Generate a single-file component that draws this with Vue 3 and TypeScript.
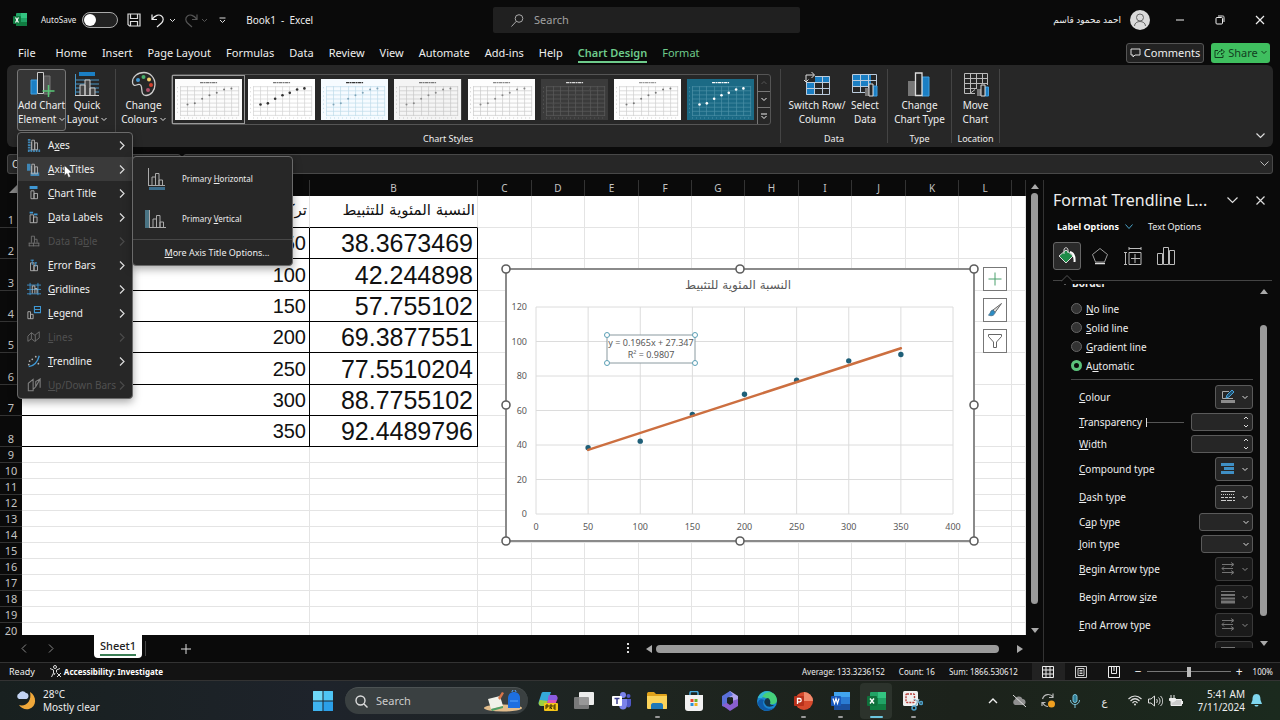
<script setup lang="ts">
import { ref } from 'vue'

type Part = { text: string; key: boolean }

// "A&xes" -> the letter after & is the underlined access key
function parts(label: string): Part[] {
  const at = label.indexOf('&')
  if (at < 0) return [{ text: label, key: false }]
  return [
    { text: label.slice(0, at), key: false },
    { text: label.slice(at + 1, at + 2), key: true },
    { text: label.slice(at + 2), key: false },
  ].filter((p) => p.text.length > 0)
}

const tabs = ['File', 'Home', 'Insert', 'Page Layout', 'Formulas', 'Data', 'Review', 'View', 'Automate', 'Add-ins', 'Help', 'Chart Design', 'Format']

const bars = '<path d="M5 4.500V13.500M5 13.500H8.500V2.500H5.500V13.500M9 5.500h3v8H9z" fill="none" stroke="#b5b5b5"/>'
const menu = [
  { label: 'A&xes', icon: '<path d="M2.500 1v13.500H15" fill="none" stroke="#3f86b5" stroke-width="3" stroke-dasharray="2 1"/>' + bars },
  { label: '&Axis Titles', icon: '<path d="M0 2h4v8H0zM4 12h10v4H4z" fill="#3f86b5"/>' + bars },
  { label: '&Chart Title', icon: '<path d="M3 0h9v3.500H3z" fill="#3f97d3"/><path d="M4.500 14.500V5.500h3.500V14.500zM8 8.500h4v6H8z" fill="none" stroke="#b5b5b5"/>' },
  { label: '&Data Labels', icon: '<path d="M3.500 14.500V5.500H7.500V14.500zM7.500 8h4v6.500h-4z" fill="none" stroke="#b5b5b5"/><path d="M3 2h4v2H3zM8 4h4v2H8z" fill="#3f97d3"/>' },
  { label: 'Data Ta&ble', icon: '<path d="M5 10V2.500h3.500V10M8.500 6h3v4M2 10.500h12M2 13.500h12M2.500 10v4M7.500 10v4M13.500 10v4" fill="none" stroke="#888"/>', off: true },
  { label: '&Error Bars', icon: '<path d="M4 14.500V5.500h4V14.500zM8 14.500V8.500H12V14.500z" fill="none" stroke="#b5b5b5"/><path d="M6 2v6M4 2.500h4M10 5v5M8.500 5.500h3" stroke="#3f97d3" fill="none"/>' },
  { label: '&Gridlines', icon: '<path d="M0 3.500h16M0 8.500h16M0 13.500h16M3.500 1v14M12.500 1v14" stroke="#3f97d3" fill="none"/><path d="M6 13V4.500h3V13M9 7.500h2.500V13" stroke="#c5c5c5" fill="none"/>' },
  { label: '&Legend', icon: '<path d="M8.500.5h7v7h-7zM9 4h6" stroke="#3f97d3" fill="none" stroke-width="1.300"/><path d="M1 14.500V6.500h3V14.500zM4 9.500h3V14.500H4z" fill="none" stroke="#b5b5b5"/>' },
  { label: '&Lines', icon: '<path d="M1 13V7l4-4 4 3 5-4v7l-5 4-4-3-4 3M5 3v7M9.500 6v7" fill="none" stroke="#888"/>', off: true },
  { label: '&Trendline', icon: '<path d="M2 14.500C8 13.500 12 10 14 2" fill="none" stroke="#3f97d3" stroke-width="1.500"/><g fill="#b5b5b5"><circle cx="3" cy="8" r="1"/><circle cx="6" cy="6" r="1"/><circle cx="10" cy="3" r="1"/><circle cx="13" cy="11" r="1"/><circle cx="2" cy="12" r="1"/></g>' },
  { label: '&Up/Down Bars', icon: '<path d="M1.500 14.500V6L7 1.500v13zM7 13l3-3 5-9v10M10 10V4l5-3" fill="none" stroke="#999" stroke-width="1.200"/>', off: true },
]

const styles = [
  { bg: '#fcfcfc', grid: '#cfcfcf', dot: '#777', title: '#777', r: 1 },
  { bg: '#ffffff', grid: '#d5d5d5', dot: '#333', title: '#777', r: 1.3 },
  { bg: '#f6fbff', grid: '#bfdcea', dot: '#7fa4b8', title: '#333', r: 1 },
  { bg: '#f4f4f4', grid: '#c8c8c8', dot: '#888', title: '#777', r: 1 },
  { bg: '#fdfdfd', grid: '#cccccc', dot: '#888', title: '#888', r: 1 },
  { bg: '#3b3b3b', grid: '#5c5c5c', dot: '#4a4a4a', title: '#ddd', r: 1 },
  { bg: '#fefefe', grid: '#cfcfcf', dot: '#777', title: '#999', r: 1 },
  { bg: '#1b6a85', grid: '#4c90a7', dot: '#ffffff', title: '#ffffff', r: 1.3 },
]

const columns = ['A', 'B', 'C', 'D', 'E', 'F', 'G', 'H', 'I', 'J', 'K', 'L', '']
const rows = [
  { a: '50', b: '38.3673469' },
  { a: '100', b: '42.244898' },
  { a: '150', b: '57.755102' },
  { a: '200', b: '69.3877551' },
  { a: '250', b: '77.5510204' },
  { a: '300', b: '88.7755102' },
  { a: '350', b: '92.4489796' },
]
const emptyRows = Array.from({ length: 12 }, (_, i) => i + 9)

// chart geometry
const px = (x: number) => 35 + (x / 400) * 417
const py = (y: number) => 250 - (y / 120) * 207
const xTicks = [0, 50, 100, 150, 200, 250, 300, 350, 400]
const yTicks = [0, 20, 40, 60, 80, 100, 120]
const points = rows.map((r) => ({ x: Number(r.a), y: Number(r.b) }))
const handles = [[5, 5], [239, 5], [473, 5], [5, 141], [473, 141], [5, 277], [239, 277], [473, 277]]
const eqHandles = [[106, 71], [194, 71], [106, 99], [194, 99]]

const line = ref('Automatic')
const lineKinds = ['&No line', '&Solid line', '&Gradient line', 'A&utomatic']
const icCompound = '<path d="M0 1h13v3H0zM3 5h10v3H3zM0 9h13v3H0z" fill="#3f8fc4"/>'
const icDash = '<path d="M0 1.500h14" stroke="#ccc"/><path d="M0 4.500h14" stroke="#ccc" stroke-dasharray="1 1"/><path d="M0 7.500h14" stroke="#ccc" stroke-dasharray="3 1"/><path d="M0 10.500h14" stroke="#ccc" stroke-dasharray="5 1"/>'
const icArrow = '<path d="M1 2.500h11M1 6.500h11M1 10.500h11M10 .5l3 2-3 2M10 8.500l3 2-3 2M3 4.500l-2 2 2 2" fill="none" stroke="#bbb"/>'
const icSize = '<path d="M0 1.500h14" stroke="#bbb"/><path d="M0 5h14M0 8.500h14" stroke="#bbb" stroke-width="2"/><path d="M0 12h14" stroke="#bbb" stroke-width="3"/>'
const icColour = '<path d="M8 1.500H1.500v7H12" fill="none" stroke="#aaa"/><path d="M0 10h14v3H0z" fill="#8c8c8c"/><path d="M5 8l1-3 5-5 2 2-5 5z" fill="#1d4f70" stroke="#4aa3d8"/>'
const fields = [
  { label: '&Colour', kind: 'btn', icon: icColour },
  { label: '&Transparency', kind: 'slide', icon: '' },
  { label: '&Width', kind: 'spin', icon: '' },
  { label: '&Compound type', kind: 'btn', icon: icCompound },
  { label: '&Dash type', kind: 'btn', icon: icDash },
  { label: 'C&ap type', kind: 'cap', icon: '' },
  { label: '&Join type', kind: 'join', icon: '' },
  { label: '&Begin Arrow type', kind: 'btn', icon: icArrow, off: true },
  { label: 'Begin Arrow &size', kind: 'btn', icon: icSize, off: true },
  { label: '&End Arrow type', kind: 'btn', icon: icArrow, off: true },
  { label: '', kind: 'btn', icon: icSize, off: true },
]

const apps = [
  { name: 'Copilot', run: '', icon: '<path d="M5 1h8l-5 14H4c-3 0-4-2-3-5l2-6c.4-2 1-3 2-3z" fill="#35a8d8"/><path d="M2 9l-1 2c-1 3 1 4 3 4h4l2-5z" fill="#9fd03f"/><path d="M11 4h5c3 0 4 2 3 5l-2 5c-1 2-2 3-4 3H8z" fill="#d853b8"/><path d="M11 4h5c3 0 4 2 3 5h-9z" fill="#8a5be0"/><rect x="6" y="12" width="14" height="8" rx="1" fill="#f5c518"/><path d="M8 18v-4h2v2H8M12 18v-4h2v2h-2l2 2M18 14h-2v4h2M16 16h2" stroke="#3a2c00" fill="none"/>' },
  { name: 'Task View', run: '', icon: '<rect x="5" y="1" width="15" height="13" rx="1" fill="#ececec"/><rect x="0" y="6" width="15" height="12" rx="1" fill="#8a8a8a" opacity=".85"/>' },
  { name: 'Teams', run: '', icon: '<circle cx="12" cy="4" r="3" fill="#7b83eb"/><circle cx="17.500" cy="5" r="2" fill="#5059c9"/><path d="M8 8h8v6c0 6-8 6-8 0z" fill="#7b83eb"/><path d="M16 8h4v5c0 3-2 4-4 3z" fill="#5059c9"/><rect x="1" y="5" width="10" height="10" rx="1" fill="#fff"/><path d="M3.500 7.500h5M6 7.500V13" stroke="#3c3f8f" stroke-width="1.500"/>' },
  { name: 'File Explorer', run: 'on', icon: '<path d="M0 3c0-1 .5-2 1.500-2H7l2 2h10c1 0 1 1 1 1v5H0z" fill="#e0a21b"/><path d="M0 5h20v12c0 1-.5 1-1 1H1c-1 0-1-1-1-1z" fill="#fbd35a"/><path d="M4 18v-4c0-1 1-2 2-2h8c1 0 2 1 2 2v4z" fill="#1f78b8"/>' },
  { name: 'Microsoft Store', run: '', icon: '<path d="M6 5V2c0-1 .5-1.500 1.500-1.500h5c1 0 1.500.5 1.500 1.500v3" fill="none" stroke="#46a9dd" stroke-width="1.500"/><path d="M1 4h18v13c0 2-1 3-3 3H4c-2 0-3-1-3-3z" fill="#f2f2f2"/><path d="M6.500 8h3v3h-3z" fill="#e8442c"/><path d="M10.500 8h3v3h-3z" fill="#6fae2b"/><path d="M6.500 12h3v3h-3z" fill="#2b93d8"/><path d="M10.500 12h3v3h-3z" fill="#f2b21b"/>' },
  { name: 'Microsoft 365', run: '', icon: '<path d="M10 0l8 5v5l-5 3V8L7 5z" fill="#b0a4ee"/><path d="M10 0L2 5v10l5 2V7l6-3z" fill="#5a6fd8"/><path d="M2 14l7-3 9-3v7l-8 5z" fill="#8a5fd0"/><path d="M7 7l5-1 1 1v5l-3 2-3-2z" fill="#1d241f"/>' },
  { name: 'Edge', run: '', icon: '<circle cx="10" cy="10" r="10" fill="#1a86d0"/><path d="M1 7C3-2 19-2 20 9c0 4-4 5-7 4 1-5-6-8-12-6z" fill="#46d07a"/><path d="M1 7c2-6 9-8 13-6-5 0-8 2-9 6z" fill="#2fb4d8"/><path d="M7 9c-3 4 2 11 10 8-6 6-16 1-16-5 0-3 3-5 6-3z" fill="#0f5aa8"/><path d="M13 13c1-2 0-5-2-6-2 0-5 3-3 6 2 4 7 3 9 1-2 0-3 0-4-1z" fill="#16354a"/>' },
  { name: 'PowerPoint', run: 'on', icon: '<circle cx="11" cy="10" r="9" fill="#d6492c"/><path d="M11 1a9 9 0 0 1 9 9h-9z" fill="#f08a6c"/><rect x="1" y="5" width="10" height="10" rx="1" fill="#b8301a"/><path d="M4.500 13V7.500h2a1.700 1.700 0 0 1 0 3.400h-2" stroke="#fff" fill="none" stroke-width="1.300"/>' },
  { name: 'Word', run: 'on', icon: '<rect x="4" y="1" width="16" height="18" rx="1" fill="#2b7cd3"/><path d="M4 1h16v5H4z" fill="#41a5ee"/><path d="M4 13h16v6H4z" fill="#1b4f9c"/><rect x="1" y="5" width="10" height="10" rx="1" fill="#185abd"/><path d="M3 7.500l1.500 5 1.500-5 1.500 5 1.500-5" stroke="#fff" fill="none" stroke-width="1.200"/>' },
  { name: 'Excel', run: 'active', icon: '<rect x="4" y="1" width="16" height="18" rx="1" fill="#21a366"/><path d="M12 1h8v6h-8z" fill="#33c481"/><path d="M4 7h8v12H4zM12 13h8v6h-8z" fill="#107c41"/><rect x="1" y="5" width="10" height="10" rx="1" fill="#0f703b"/><path d="M4 7.500l4 5M8 7.500l-4 5" stroke="#fff" stroke-width="1.400"/>' },
  { name: 'Snipping Tool', run: 'on', icon: '<rect x="0" y="0" width="15" height="15" rx="1.500" fill="#efefef"/><rect x="3" y="3" width="8.500" height="8.500" rx="1" fill="none" stroke="#b8403c" stroke-width="1.400" stroke-dasharray="2 1"/><path d="M11 8l6 4M16 8l-4 8" stroke="#8fb8cc" stroke-width="1.500"/><circle cx="11" cy="17" r="2" fill="none" stroke="#4d9fc8" stroke-width="1.500"/><circle cx="18" cy="12" r="1.500" fill="none" stroke="#4d9fc8" stroke-width="1.500"/>' },
]
</script>

<template>
  <div class="app">
    <header class="titlebar">
      <div class="tb-left">
        <svg class="logo" width="14" height="14" viewBox="0 0 14 14"><rect x="3" width="11" height="13" rx="1" fill="#21a366" /><path d="M8 0h6v5H8z" fill="#33c481" /><path d="M3 9h11v4H3z" fill="#107c41" /><rect y="3" width="8" height="8" rx="1" fill="#0f7a40" /><path d="M2.500 4.500l3 5M5.500 4.500l-3 5" stroke="#fff" stroke-width="1.200" /></svg>
        <label class="autosave">AutoSave <input type="checkbox" role="switch" class="toggle" /></label>
        <button class="ib save" aria-label="Save"><svg width="14" height="14" viewBox="0 0 14 14" fill="none" stroke="#ddd" stroke-width="1.200"><path d="M1 1h12v12H2.500L1 11.500zM3.500 1v4.500h7V1M3.500 13V8.500h7V13" /></svg></button>
        <button class="ib undo" aria-label="Undo"><svg width="15" height="15" viewBox="0 0 15 15" fill="none" stroke="#eee" stroke-width="1.200"><path d="M2 1.500V6.500H7M2 6.500C5 2 9 1 11.500 3s2 5 0 7L7 14" /></svg></button>
        <svg class="chev" width="7" height="5" viewBox="0 0 7 5" fill="none" stroke="#ddd"><path d="M1 1l2.500 2.500L6 1" /></svg>
        <button class="ib redo" aria-label="Redo" disabled><svg width="15" height="15" viewBox="0 0 15 15" fill="none" stroke="#555" stroke-width="1.200"><path d="M13 1.500V6.500H8M13 6.500C10 2 6 1 3.500 3s-2 5 0 7L8 14" /></svg></button>
        <svg class="chev" width="7" height="5" viewBox="0 0 7 5" fill="none" stroke="#555"><path d="M1 1l2.500 2.500L6 1" /></svg>
        <button class="ib more" aria-label="Customise Quick Access Toolbar"><svg width="7" height="7" viewBox="0 0 7 7" fill="none" stroke="#ddd"><path d="M.5 1h6M1 3l2.500 2.500L6 3" /></svg></button>
        <span class="doc">Book1&nbsp; -&nbsp; Excel</span>
      </div>
      <label class="search">
        <svg width="13" height="13" viewBox="0 0 13 13" fill="none" stroke="#aaa"><circle cx="8" cy="4.500" r="3.800" /><path d="M5.300 7.300L.5 12.500" /></svg>
        <input type="search" placeholder="Search" aria-label="Search" />
      </label>
      <div class="tb-right">
        <span class="user" dir="rtl">احمد محمود قاسم</span>
        <svg class="avatar" width="20" height="20" viewBox="0 0 20 20"><circle cx="10" cy="10" r="10" fill="#dadada" /><g fill="none" stroke="#666"><circle cx="10" cy="7.500" r="3.500" /><path d="M4.500 16c0-6 11-6 11 0" /></g></svg>
        <button class="ib" aria-label="Minimise"><svg width="10" height="10" viewBox="0 0 10 10"><path d="M1 5h8" stroke="#eee" /></svg></button>
        <button class="ib" aria-label="Restore"><svg width="10" height="10" viewBox="0 0 10 10" fill="none" stroke="#eee"><rect x="1" y="2.500" width="6.500" height="6.500" rx="1" /><path d="M3 1h4.500C9 1 9 1.500 9 2.500V7" /></svg></button>
        <button class="ib" aria-label="Close"><svg width="10" height="10" viewBox="0 0 10 10"><path d="M1 1l8 8M9 1L1 9" stroke="#eee" stroke-width="1.200" /></svg></button>
      </div>
    </header>

    <nav class="tabs">
      <button v-for="t in tabs" :key="t" class="tab" :class="{ active: t === 'Chart Design', green: t === 'Format' }">{{ t }}</button>
      <span class="spacer"></span>
      <button class="comments"><svg width="11" height="10" viewBox="0 0 11 10" fill="none" stroke="#ddd"><path d="M1 1h9v6H5L3 9V7H1z" /></svg>Comments</button>
      <button class="share"><svg width="11" height="11" viewBox="0 0 11 11" fill="none" stroke="#12401f"><path d="M4 3.500H1v7h8V8M3.500 7.500C4 5 5.500 4 7.500 4V2l3 3-3 2.500V6" /></svg>Share<svg width="6" height="5" viewBox="0 0 6 5" fill="none" stroke="#12401f"><path d="M.5 1L3 3.500 5.500 1" /></svg></button>
    </nav>

    <section class="ribbon">
      <div class="group g1">
        <div class="anchor">
          <button class="big pressed" aria-haspopup="menu" aria-expanded="true">
            <svg width="26" height="26" viewBox="0 0 26 26"><path d="M2 9h6v14H2z" fill="#1b7fc4" stroke="#3f9fe0" /><path d="M15 5h6v18h-6z" fill="#555" stroke="#777" /><path d="M8.500 1.500h6v21h-6z" fill="#262626" stroke="#ccc" /><path d="M19.500 14v12M13.500 20h12" stroke="#58c777" stroke-width="1.500" /></svg>
            <span>Add Chart<br />Element <svg class="cv" width="6" height="5" viewBox="0 0 6 5"><path d="M.5 1L3 3.500 5.500 1" /></svg></span>
          </button>
          <ul class="menu" role="menu">
            <li v-for="m in menu" :key="m.label" role="none">
              <button role="menuitem" :disabled="m.off" :class="{ hot: m.label === '&Axis Titles' }">
                <svg class="mi" width="14" height="14" viewBox="0 0 16 16" v-html="m.icon"></svg>
                <span class="ml"><template v-for="(p, i) in parts(m.label)" :key="i"><u v-if="p.key">{{ p.text }}</u><template v-else>{{ p.text }}</template></template></span>
                <svg width="6" height="9" viewBox="0 0 6 9" fill="none" :stroke="m.off ? '#4a4a4a' : '#ddd'" stroke-width="1.200"><path d="M1 .5l4 4-4 4" /></svg>
              </button>
            </li>
          </ul>
          <div class="submenu" role="menu">
            <button role="menuitem" class="sub">
              <svg width="22" height="24" viewBox="0 0 22 24"><path d="M3.500 1v17.500M3 18.500h17M7 18v-8h3.500v8M10.500 18V6.500H14V18M14 18v-5h3.500v5" stroke="#aaa" fill="none" /><path d="M4 20h16v3H4z" fill="#3c6d8c" /></svg>
              <span>Primary <u>H</u>orizontal</span>
            </button>
            <button role="menuitem" class="sub">
              <svg width="22" height="24" viewBox="0 0 22 24"><path d="M4.500 3v17.500M4 20.500h17M8 20v-8h3.500v8M11.500 20V8.500H15V20M15 20v-5h3.500v5" stroke="#aaa" fill="none" /><path d="M0 3h4v18H0z" fill="#4a7484" /></svg>
              <span>Primary <u>V</u>ertical</span>
            </button>
            <button role="menuitem" class="submore"><u>M</u>ore Axis Title Options...</button>
          </div>
          <svg class="cursor" width="9" height="13" viewBox="0 0 9 13"><path d="M.5.5v10l2.500-2 1.500 4 2-1-1.500-3.500h3.500z" fill="#fff" stroke="#333" stroke-width=".5" /></svg>
        </div>
        <button class="big ql">
          <svg width="26" height="26" viewBox="0 0 26 26"><path d="M5 1h16v4H5z" fill="#1b7fc4" /><path d="M1.500 3v21M1 9h24M1 13h24M1 17h24M1 21h24" stroke="#4a96c6" /><path d="M6 24V14h5v10M11 24V9h5v15M16 24v-7h5v7M1 24.500h24" fill="#444" stroke="#ccc" /></svg>
          <span>Quick<br />Layout <svg class="cv" width="6" height="5" viewBox="0 0 6 5"><path d="M.5 1L3 3.500 5.500 1" /></svg></span>
        </button>
      </div>

      <div class="group g2">
        <div class="grow">
          <button class="big cc">
            <svg width="26" height="26" viewBox="0 0 26 26"><path d="M13 1.500C6 1.500 1.500 6 1.500 11c0 3 2 4 4 3 2.500-1 4.500-1 5 2 .5 4 0 8.500 4.500 8.500 5 0 9-5 9-11 0-7-5-12-11-12z" fill="none" stroke="#ccc" stroke-width="1.300" /><circle cx="7" cy="9" r="2" fill="#3f97d3" /><circle cx="12.500" cy="6" r="2" fill="#49b06c" /><circle cx="18" cy="8.500" r="2" fill="#f3d06b" /><circle cx="20" cy="14" r="2" fill="#d0402e" /><circle cx="17" cy="19" r="2" fill="#b0506a" /></svg>
            <span>Change<br />Colours <svg class="cv" width="6" height="5" viewBox="0 0 6 5"><path d="M.5 1L3 3.500 5.500 1" /></svg></span>
          </button>
          <div class="gallery">
            <button v-for="(s, i) in styles" :key="i" class="thumb" :class="{ sel: i === 0 }" :aria-label="'Style ' + (i + 1)">
              <svg viewBox="0 0 67 40" preserveAspectRatio="none">
                <rect width="67" height="40" :fill="s.bg" />
                <path d="M25 3.500h17" :stroke="s.title" stroke-width="1.200" stroke-dasharray="3 .5 2 .5" />
                <path d="M5 7.500h59M5 11.500h59M5 15.500h59M5 19.500h59M5 23.500h59M5 27.500h59M5 31.500h59M5 35.500h59M5.500 7v29M12.500 7v29M19.500 7v29M27.500 7v29M34.500 7v29M41.500 7v29M49.500 7v29M56.500 7v29M63.500 7v29" :stroke="s.grid" stroke-width=".7" />
                <path d="M2.500 8v28M5 38h60" :stroke="s.grid" stroke-dasharray="1 3" />
                <circle v-for="(p, j) in points" :key="j" :cx="12.500 + j * 7.300" :cy="36 - p.y * 0.290" :r="s.r" :fill="s.dot" />
              </svg>
            </button>
            <div class="gscroll">
              <button aria-label="Previous styles"><svg width="6" height="5" viewBox="0 0 6 5" fill="none" stroke="#555"><path d="M.5 4L3 1.500 5.500 4" /></svg></button>
              <button aria-label="Next styles"><svg width="6" height="5" viewBox="0 0 6 5" fill="none" stroke="#eee"><path d="M.5 1L3 3.500 5.500 1" /></svg></button>
              <button aria-label="All styles"><svg width="6" height="7" viewBox="0 0 6 7" fill="none" stroke="#eee"><path d="M0 1h6M.5 3L3 5.500 5.500 3" /></svg></button>
            </div>
          </div>
        </div>
        <div class="glabel">Chart Styles</div>
      </div>

      <div class="group g3">
        <div class="grow">
          <button class="big sw">
            <svg width="26" height="26" viewBox="0 0 26 26"><path d="M2 5h24v19H2z" fill="#1b7fc4" /><path d="M11 12h15v12H11z" fill="#262626" /><path d="M2.500 5.500h23v18h-23zM2.500 11.500h23M2.500 17.500h23M10.500 5.500v18M18.500 5.500v18" fill="none" stroke="#bcd" /><path d="M0 0h11v11H0z" fill="#262626" /><path d="M2 11V4h8M7.500 1L10.500 4 7.500 7M-.5 8.500L2 11l2.500-2.500" fill="none" stroke="#ddd" /></svg>
            <span>Switch Row/<br />Column</span>
          </button>
          <button class="big sd">
            <svg width="26" height="26" viewBox="0 0 26 26"><path d="M1 4h18v12H1z" fill="#1b7fc4" /><path d="M.5 3.500h24v18H.5zM.5 9.500h24M.5 15.500h24M8.500 3.500v18M16.500 3.500v18" fill="none" stroke="#bcd" /><path d="M13 17h4v8h-4z" fill="#777" /><path d="M21 15h4v10h-4z" fill="#1b7fc4" stroke="#3f9fe0" /><path d="M17 13h4v12h-4z" fill="#262626" stroke="#ddd" /></svg>
            <span>Select<br />Data</span>
          </button>
        </div>
        <div class="glabel">Data</div>
      </div>

      <div class="group g4">
        <div class="grow">
          <button class="big">
            <svg width="26" height="26" viewBox="0 0 26 26"><path d="M2 10h7v15H2z" fill="#777" /><path d="M16 6h7v19h-7z" fill="#1b7fc4" stroke="#3f9fe0" /><path d="M9.500 2h6.500v22.500H9.500z" fill="#262626" stroke="#ddd" stroke-width="1.300" /></svg>
            <span>Change<br />Chart Type</span>
          </button>
        </div>
        <div class="glabel">Type</div>
      </div>

      <div class="group g5">
        <div class="grow">
          <button class="big">
            <svg width="26" height="26" viewBox="0 0 26 26"><path d="M12 22.500H1.500v-20h23V14M1.500 7.500h23M1.500 12.500h23M1.500 17.500H14M7.500 2.500v20M13.500 2.500v15M19.500 2.500V13M7 22.500l5-4" fill="none" stroke="#bbb" /><path d="M14 18h4v7h-4z" fill="#777" /><path d="M22 16h3.500v9H22z" fill="#1b7fc4" stroke="#3f9fe0" /><path d="M18 14h4v11h-4z" fill="#262626" stroke="#ddd" /></svg>
            <span>Move<br />Chart</span>
          </button>
        </div>
        <div class="glabel">Location</div>
      </div>
      <button class="ib collapse" aria-label="Collapse ribbon"><svg width="9" height="6" viewBox="0 0 9 6" fill="none" stroke="#ddd" stroke-width="1.200"><path d="M.5.5l4 4 4-4" /></svg></button>
    </section>

    <div class="fbar">
      <input class="name" value="Chart 1" aria-label="Name box" />
      <div class="formula"><input aria-label="Formula bar" /><svg width="9" height="6" viewBox="0 0 9 6" fill="none" stroke="#bbb"><path d="M.5.5l4 4 4-4" /></svg></div>
    </div>

    <main class="main">
      <div class="book">
        <div class="gridwrap">
          <div class="sheet">
            <table>
              <colgroup><col class="cn" /><col class="ca" /><col class="cb" /><col v-for="n in 10" :key="n" :class="[2, 4, 5, 7, 9, 10].includes(n) ? 'c53' : 'c54'" /><col /></colgroup>
              <thead>
                <tr><th class="corner"><svg width="9" height="9" viewBox="0 0 9 9"><path d="M9 0v9H0z" fill="#8a8a8a" /></svg></th><th v-for="(c, i) in columns" :key="i">{{ c }}</th></tr>
              </thead>
              <tbody>
                <tr class="r32 first"><th>1</th><td class="ar" dir="rtl">تركيز</td><td class="ar" dir="rtl">النسبة المئوية للتثبيط</td><td v-for="n in 11" :key="n"></td></tr>
                <tr v-for="(r, i) in rows" :key="i" :class="[1, 4].includes(i) ? 'r32' : 'r31'"><th>{{ i + 2 }}</th><td class="va">{{ r.a }}</td><td class="vb">{{ r.b }}</td><td v-for="n in 11" :key="n"></td></tr>
                <tr v-for="n in emptyRows" :key="n" class="r16"><th>{{ n }}</th><td v-for="k in 13" :key="k"></td></tr>
              </tbody>
            </table>
            <svg class="chart" width="479" height="283" viewBox="0 0 479 283" role="img" aria-label="Scatter chart with trendline">
              <rect x="5" y="5" width="468" height="272" fill="#fff" stroke="#8a8a8a" stroke-width="2" />
              <text class="ctitle" x="237" y="25" text-anchor="middle">النسبة المئوية للتثبيط</text>
              <g stroke="#dcdcdc">
                <line v-for="t in yTicks" :key="'h' + t" :x1="px(0)" :x2="px(400)" :y1="py(t)" :y2="py(t)" />
                <line v-for="t in xTicks" :key="'v' + t" :x1="px(t)" :x2="px(t)" :y1="py(0)" :y2="py(120)" />
              </g>
              <text v-for="t in yTicks" :key="'ty' + t" class="tick" x="26" :y="py(t) + 3" text-anchor="end">{{ t }}</text>
              <text v-for="t in xTicks" :key="'tx' + t" class="tick" :x="px(t)" y="266" text-anchor="middle">{{ t }}</text>
              <circle v-for="p in points" :key="p.x" :cx="px(p.x)" :cy="py(p.y)" r="2.700" fill="#1f5f78" />
              <line :x1="px(50)" :y1="py(0.1965 * 50 + 27.347)" :x2="px(350)" :y2="py(0.1965 * 350 + 27.347)" stroke="#cc6f40" stroke-width="2.500" stroke-linecap="round" />
              <rect x="106" y="71" width="88" height="28" fill="#fff" stroke="#8a9aa0" />
              <text class="tick" x="150" y="82" text-anchor="middle">y = 0.1965x + 27.347</text>
              <text class="tick" x="150" y="94" text-anchor="middle">R² = 0.9807</text>
              <circle v-for="(h, i) in eqHandles" :key="'e' + i" :cx="h[0]" :cy="h[1]" r="2.500" fill="#fff" stroke="#5b9fb5" />
              <circle v-for="(h, i) in handles" :key="i" :cx="h[0]" :cy="h[1]" r="4" fill="#fff" stroke="#5e5e5e" stroke-width="1.600" />
            </svg>
            <div class="cbtns">
              <button aria-label="Chart elements"><svg width="14" height="14" viewBox="0 0 14 14"><path d="M7 .5v13M.5 7h13" stroke="#4aa06c" /></svg></button>
              <button aria-label="Chart styles"><svg width="14" height="14" viewBox="0 0 14 14"><path d="M13.500.5L5 7l2 2.500L13.500.5z" fill="#ddd" stroke="#666" /><path d="M5 7C2 7 3 11 .5 12c3 1.500 6 .5 6.500-2.500z" fill="#2b8cc4" stroke="#4b7590" /></svg></button>
              <button aria-label="Chart filters"><svg width="14" height="14" viewBox="0 0 14 14"><path d="M.5.500h13V2.500L8.500 8v5.500h-3V8L.5 2.500z" fill="none" stroke="#666" /></svg></button>
            </div>
          </div>
          <div class="vscroll"><i class="up"></i><div class="track"><b></b></div><i class="down"></i></div>
        </div>
        <div class="sheetbar">
          <button class="ib nav" aria-label="Previous sheet"><svg width="6" height="9" viewBox="0 0 6 9" fill="none" stroke="#888"><path d="M5 .5l-4 4 4 4" /></svg></button>
          <button class="ib nav" aria-label="Next sheet"><svg width="6" height="9" viewBox="0 0 6 9" fill="none" stroke="#888"><path d="M1 .5l4 4-4 4" /></svg></button>
          <button class="sheettab"><span>Sheet1</span></button>
          <span class="tsep"></span>
          <button class="ib add" aria-label="New sheet"><svg width="10" height="10" viewBox="0 0 10 10"><path d="M5 0v10M0 5h10" stroke="#ddd" /></svg></button>
          <div class="hscroll">
            <svg width="3" height="11" viewBox="0 0 3 11" fill="#ddd"><path d="M0 0h2v2H0zM0 4h2v2H0zM0 8h2v2H0z" /></svg>
            <i class="left"></i><div class="htrack"><b></b></div><i class="right"></i>
          </div>
        </div>
      </div>

      <aside class="pane">
        <div class="phead">
          <h2>Format Trendline L...</h2>
          <button class="ib" aria-label="Pane options"><svg width="11" height="7" viewBox="0 0 11 7" fill="none" stroke="#ddd" stroke-width="1.200"><path d="M.5.5l5 5 5-5" /></svg></button>
          <button class="ib" aria-label="Close pane"><svg width="9" height="9" viewBox="0 0 9 9"><path d="M.5.5l8 8M8.500.5l-8 8" stroke="#ddd" stroke-width="1.200" /></svg></button>
        </div>
        <div class="ptabs">
          <button class="pt on">Label Options</button>
          <svg width="8" height="6" viewBox="0 0 8 6" fill="none" stroke="#4aa3c8"><path d="M.5.5L4 4.500 7.500.5" /></svg>
          <button class="pt">Text Options</button>
        </div>
        <div class="picons">
          <button class="on" aria-label="Fill and line"><svg width="18" height="18" viewBox="0 0 18 18"><path d="M8 3l7 6-7 7-7-7z" fill="#1e8a48" stroke="#ddd" /><path d="M6 7V3c0-3 4-3 4 0v3" fill="none" stroke="#ddd" /><path d="M12 5c4 1 5 4 4.500 10" fill="none" stroke="#fff" stroke-width="2" /></svg></button>
          <button aria-label="Effects"><svg width="18" height="18" viewBox="0 0 18 18"><path d="M9 1.500l7.500 6-3 7.500h-9l-3-7.500z" fill="none" stroke="#999" /><path d="M4 16.500h10" stroke="#ddd" stroke-width="1.500" /></svg></button>
          <button aria-label="Size and properties"><svg width="18" height="18" viewBox="0 0 18 18" fill="none" stroke="#bbb"><path d="M5 5.500h12v12H5zM5 1.500h12M5 0v3M17 0v3M1.500 5v12M0 5.500h3M0 17.500h3M11 7v9M7 11.500h9" /></svg></button>
          <button aria-label="Label options"><svg width="18" height="18" viewBox="0 0 18 18" fill="none" stroke="#bbb"><path d="M.5 6.500h5v11h-5zM6.500 .5h5v17h-5zM12.500 3.500h5v14h-5z" /></svg></button>
        </div>
        <svg class="notch" width="12" height="8" viewBox="0 0 12 8"><path d="M0 7.500L6 1.500l6 6" fill="#0a0a0a" stroke="#555" /></svg>
        <div class="pbody">
          <div class="pscroll">
            <h3><i></i>Border</h3>
            <label v-for="k in lineKinds" :key="k" class="radio"><input v-model="line" type="radio" name="border" :value="k.replace('&', '')" /><span><template v-for="(p, i) in parts(k)" :key="i"><u v-if="p.key">{{ p.text }}</u><template v-else>{{ p.text }}</template></template></span></label>
            <hr />
            <div v-for="(f, n) in fields" :key="n" class="field" :class="{ tall: f.kind === 'btn' }">
              <label :for="'f' + n"><template v-for="(p, i) in parts(f.label)" :key="i"><u v-if="p.key">{{ p.text }}</u><template v-else>{{ p.text }}</template></template></label>
              <input v-if="f.kind === 'slide'" type="range" value="0" class="trans" aria-label="Transparency slider" />
              <button v-if="f.kind === 'btn'" :id="'f' + n" class="drop" :disabled="f.off">
                <svg width="14" height="14" viewBox="0 0 14 14" v-html="f.icon"></svg>
                <svg width="6" height="5" viewBox="0 0 6 5" fill="none" stroke="#ddd"><path d="M.5 1L3 3.500 5.500 1" /></svg>
              </button>
              <span v-else-if="f.kind === 'slide' || f.kind === 'spin'" class="spin">
                <input :id="'f' + n" type="text" />
                <svg width="6" height="12" viewBox="0 0 6 12" fill="none" stroke="#ddd"><path d="M1 3l2-2 2 2M1 9l2 2 2-2" /></svg>
              </span>
              <span v-else class="spin" :class="f.kind">
                <select :id="'f' + n"><option></option></select>
                <svg width="6" height="5" viewBox="0 0 6 5" fill="none" stroke="#ddd"><path d="M.5 1L3 3.500 5.500 1" /></svg>
              </span>
            </div>
          </div>
          <div class="vscroll ps"><i class="up"></i><div class="track"><b></b></div><i class="down"></i></div>
        </div>
      </aside>
    </main>

    <footer class="status">
      <span class="ready">Ready</span>
      <button class="acc"><svg width="13" height="13" viewBox="0 0 13 13" fill="none" stroke="#ddd"><circle cx="6" cy="2" r="1.500" /><path d="M1 3.500l3.500 1.500v3l-2 4M11 3.500L7.500 5v2.500M6 8l-1 2M8 8l4 4M12 8l-4 4" /></svg>Accessibility: Investigate</button>
      <span class="spacer"></span>
      <span class="stat">Average: 133.3236152</span>
      <span class="stat">Count: 16</span>
      <span class="stat">Sum: 1866.530612</span>
      <div class="views">
        <button class="on" aria-label="Normal"><svg width="12" height="12" viewBox="0 0 12 12" fill="none" stroke="#eee"><path d="M.5.5h11v11H.5zM.5 4h11M.5 8h11M4 .5v11M8 .5v11" /></svg></button>
        <button aria-label="Page Layout"><svg width="12" height="12" viewBox="0 0 12 12" fill="none" stroke="#ccc"><path d="M.5.5h11v11H.5zM3 2.500h6v7H3zM4.500 4.500h3M4.500 6h3M4.500 7.500h3" /></svg></button>
        <button aria-label="Page Break Preview"><svg width="12" height="12" viewBox="0 0 12 12" fill="none" stroke="#eee"><path d="M.5.500h11v11H.5zM3.500 .5V7.500h5V.5M6 1v4" /></svg></button>
      </div>
      <div class="zoom"><button class="ib" aria-label="Zoom out">−</button><input type="range" value="50" aria-label="Zoom" /><button class="ib" aria-label="Zoom in">+</button></div>
      <span class="pct">100%</span>
    </footer>

    <footer class="taskbar">
      <button class="weather">
        <svg width="21" height="21" viewBox="0 0 21 21"><path d="M14 2c7 4 7 15-1 17-4 1-8-1-10-4 7 2 13-4 11-13z" fill="#f0a83a" /><path d="M3 9a3 3 0 0 1 0-5.500A4 4 0 0 1 10 3c3 0 3.500 5 .5 6z" fill="#c3d3f2" /></svg>
        <span>28°C<br />Mostly clear</span>
      </button>
      <button class="start" aria-label="Start"><svg width="20" height="20" viewBox="0 0 20 20"><path d="M0 1c0-1 0-1 1-1h8.500v9.500H0z" fill="#6fd8f8" /><path d="M10.500 0H19c1 0 1 0 1 1v8.500h-9.500z" fill="#4ec4f4" /><path d="M0 10.500h9.500V20H1c-1 0-1 0-1-1z" fill="#3fb4f0" /><path d="M10.500 10.500H20V19c0 1 0 1-1 1h-8.500z" fill="#2b9fe8" /></svg></button>
      <label class="tsearch">
        <svg width="13" height="13" viewBox="0 0 13 13" fill="none" stroke="#ddd" stroke-width="1.400"><circle cx="5.500" cy="5.500" r="4.500" /><path d="M9 9l3.500 3.500" /></svg>
        <input type="search" placeholder="Search" aria-label="Search the computer" />
        <svg width="40" height="22" viewBox="0 0 40 22"><ellipse cx="20" cy="18" rx="19" ry="3.500" fill="#e2bd8c" /><path d="M5 9l12-3 3 10-12 3z" fill="#f2f2ea" /><path d="M8 19l12-3v2L9 21z" fill="#4f9f68" /><path d="M15 8l4-6 2 1-4 7z" fill="#d8754a" /><path d="M25 18V8c0-8 12-8 12 0v10z" fill="#1d6fe0" /><path d="M29 2c0-3 4-3 4 0M27 11h8" stroke="#5aa8ff" fill="none" /></svg>
      </label>
      <div class="apps">
        <button v-for="a in apps" :key="a.name" :aria-label="a.name" :class="a.run"><svg width="20" height="20" viewBox="0 0 20 20" v-html="a.icon"></svg></button>
      </div>
      <div class="tray">
        <svg width="10" height="6" viewBox="0 0 10 6" fill="none" stroke="#eee" stroke-width="1.400"><path d="M1 5l4-4 4 4" /></svg>
        <svg width="15" height="12" viewBox="0 0 15 12"><path d="M3 10a3 3 0 0 1 0-5.500C4 1 9 0 10.500 4c4 0 4 6 .5 6z" fill="#909090" /><path d="M1 0l13 12" stroke="#ddd" /></svg>
        <svg width="15" height="15" viewBox="0 0 15 15"><path d="M1.500 6C3 1 9 0 12 4M12 .5V4.500H8M1 13V9.500h3.500M2 10c1 2 3 3.500 5 3.500" stroke="#bbb" fill="none" stroke-width="1.200" /><circle cx="10.500" cy="11" r="3.500" fill="#f0a020" /></svg>
        <svg width="10" height="14" viewBox="0 0 10 14" fill="none" stroke="#7fc4d8"><rect x="3" y=".5" width="4" height="8" rx="2" fill="#2f7f98" /><path d="M.5 6c0 6 9 6 9 0M5 10.500V14" /></svg>
        <span class="lang">ع</span>
        <svg width="14" height="11" viewBox="0 0 14 11" fill="none" stroke="#ddd" stroke-width="1.200"><path d="M.5 4c4-4 9-4 13 0M2.500 6c3-3 6-3 9 0M4.500 8c2-2 3-2 5 0" /><circle cx="7" cy="9.500" r="1" fill="#ddd" stroke="none" /></svg>
        <svg width="15" height="12" viewBox="0 0 15 12" fill="none" stroke="#ddd"><path d="M.5 4v4h2.500l3.500 3V1L3 4zM8.500 4c1 1 1 3 0 4M10.500 2.500c2 2 2 5 0 7M12.500 1c3 3 3 7 0 10" /></svg>
        <svg width="15" height="12" viewBox="0 0 15 12"><path d="M5 4.500h7.500v6H2V7" fill="#ccc" stroke="#eee" /><path d="M13.500 6v3M2 0v3M5 0v3M.5 3.500h6v2L4 7H3L.5 5.500z" fill="#eee" stroke="#eee" /></svg>
        <span class="clock">5:41 AM<br />7/11/2024</span>
        <svg width="11" height="13" viewBox="0 0 11 13" fill="#7fd6ee"><path d="M5.500 0C9 0 9.500 3 9.500 6l1.500 4H0L1.500 6c0-3 .5-6 4-6zM3.500 11h4c-.5 2-3.500 2-4 0z" /></svg>
      </div>
    </footer>
  </div>
</template>

<style>
html,
body {
  background: #0a0a0a;
}
</style>

<style scoped>
.app {
  display: flex;
  flex-direction: column;
  height: 100vh;
  overflow: hidden;
  background: #0a0a0a;
  color: #eee;
  font: 10px/14px "Noto Sans", "DejaVu Sans", sans-serif;
}
.app * {
  box-sizing: border-box;
}
button,
input,
select {
  font: inherit;
  color: inherit;
  background: none;
  border: 0;
  padding: 0;
  margin: 0;
  outline: 0;
  min-width: 0;
}
input {
  appearance: none;
}
svg {
  flex: none;
}
.ib {
  display: flex;
  align-items: center;
  justify-content: center;
}
.spacer {
  flex: 1;
}

/* title bar */
.titlebar {
  display: grid;
  grid-template-columns: 493fr 307fr 480fr;
  align-items: center;
  height: 40px;
}
.tb-left {
  display: flex;
  align-items: center;
  padding-left: 13px;
}
.autosave {
  display: flex;
  align-items: center;
  gap: 6px;
  margin: 0 9px 0 14px;
  font-size: 8px;
}
.toggle {
  width: 36px;
  height: 16px;
  border: 1px solid #aaa;
  border-radius: 8px;
  background: #222;
  padding: 1px;
}
.toggle::before {
  content: "";
  display: block;
  width: 12px;
  height: 12px;
  border-radius: 6px;
  background: #fff;
}
.undo {
  margin: 0 4px 0 9px;
}
.redo {
  margin: 0 2px 0 8px;
}
.more {
  margin: 0 20px 0 11px;
}
.search {
  display: flex;
  align-items: center;
  gap: 10px;
  height: 26px;
  padding-left: 18px;
  background: #202020;
  border-radius: 2px;
  font-size: 11px;
}
.search input {
  flex: 1;
}
.search input::placeholder {
  color: #a0a0a0;
  opacity: 1;
}
.tb-right {
  display: flex;
  align-items: center;
  justify-content: flex-end;
  padding-right: 15px;
  gap: 30px;
}
.user {
  font-size: 9px;
  margin-right: -21px;
}
.avatar {
  margin-right: -5px;
}

/* tabs */
.tabs {
  display: flex;
  align-items: center;
  height: 25px;
  padding: 0 10px 0 18px;
  gap: 15px;
  font-size: 11px;
}
.tab {
  height: 20px;
  padding-top: 2px;
  border-bottom: 2px solid transparent;
  white-space: nowrap;
}
.tab:first-child {
  margin-right: 5px;
}
.tab.green {
  color: #6ecb8b;
}
.tab.active {
  color: #6ecb8b;
  font-weight: 600;
  border-color: #6ecb8b;
}
.comments,
.share {
  display: flex;
  align-items: center;
  justify-content: center;
  gap: 3px;
  height: 20px;
  border-radius: 3px;
}
.comments {
  width: 78px;
  border: 1px solid #555;
  background: #222;
  margin-right: -8px;
}
.share {
  width: 59px;
  background: #3fbf5f;
  color: #12401f;
}

/* ribbon */
.ribbon {
  display: flex;
  position: relative;
  z-index: 5;
  margin: 0 7px;
  height: 82px;
  flex: none;
  padding: 4px 0;
  background: #272727;
  border-radius: 6px;
}
.group {
  display: flex;
  flex-direction: column;
  border-right: 1px solid #444;
}
.g1 {
  flex-direction: row;
  width: 109px;
  padding-left: 10px;
}
.g2 {
  width: 665px;
}
.g3 {
  width: 107px;
}
.g3 .grow {
  padding-left: 4px;
}
.g4 {
  width: 64px;
}
.g5 {
  width: 48px;
}
.grow {
  display: flex;
  flex: 1;
  justify-content: center;
}
.glabel {
  text-align: center;
  font-size: 9px;
  line-height: 8px;
}
.big {
  display: flex;
  flex-direction: column;
  align-items: center;
  height: 62px;
  padding-top: 2px;
  line-height: 14px;
  white-space: nowrap;
}
.big > span {
  margin-top: 1px;
}
.cv {
  fill: none;
  stroke: #ddd;
  vertical-align: 1px;
}
.anchor {
  position: relative;
}
.pressed {
  width: 49px;
  background: #363636;
  border: 1px solid #777;
  border-radius: 3px;
  padding-top: 1px;
}
.ql {
  width: 42px;
}
.cc {
  width: 55px;
}
.sw {
  width: 58px;
}
.sd {
  width: 38px;
}
.gallery {
  display: flex;
  flex: 1;
  margin: 5px 9px 0 0;
  height: 51px;
  border: 1px solid #555;
  border-radius: 3px;
}
.thumb {
  flex: 1;
  display: flex;
  padding: 4px 3px;
}
.thumb svg {
  width: 100%;
  height: 41px;
}
.thumb.sel {
  outline: 1px solid #999;
  outline-offset: -1px;
}
.gscroll {
  width: 13px;
  display: flex;
  flex-direction: column;
}
.gscroll button {
  flex: 1;
  display: flex;
  align-items: center;
  justify-content: center;
  border-left: 1px solid #777;
  border-bottom: 1px solid #777;
}
.gscroll button:last-child {
  border-bottom: 0;
}
.collapse {
  margin: auto 8px 4px auto;
}

/* menus */
.menu,
.submenu {
  position: absolute;
  background: #272727;
  border: 1px solid #6a6a6a;
  border-radius: 4px;
  box-shadow: 0 3px 8px rgba(0, 0, 0, 0.35);
}
.menu {
  left: 0;
  top: 63px;
  width: 116px;
  margin: 0;
  padding: 0 0 1px;
  list-style: none;
}
.menu button {
  display: flex;
  align-items: center;
  width: 100%;
  height: 24px;
  padding: 0 7px 0 9px;
  text-align: left;
}
.menu button:disabled {
  color: #505050;
}
.menu button:disabled .mi {
  opacity: 0.8;
}
.menu .hot {
  background: #3a3a3a;
}
.ml {
  flex: 1;
  margin-left: 7px;
  white-space: nowrap;
}
.submenu {
  left: 115px;
  top: 87px;
  width: 161px;
}
.sub {
  display: flex;
  align-items: center;
  gap: 15px;
  width: 100%;
  height: 40px;
  padding: 4px 0 0 12px;
  font-size: 8px;
}
.submore {
  width: 100%;
  height: 26px;
  margin-top: 2px;
  border-top: 1px solid #484848;
  font-size: 9px;
  padding-left: 9px;
}
.cursor {
  position: absolute;
  left: 47px;
  top: 96px;
}

/* formula bar */
.fbar {
  display: flex;
  gap: 2px;
  flex: none;
  height: 20px;
  margin: 7px 7px 6px;
}
.name {
  width: 174px;
  padding-left: 4px;
}
.name,
.formula {
  background: #272727;
  border: 1px solid #484848;
  border-radius: 3px;
}
.formula {
  flex: 1;
  display: flex;
  align-items: center;
  padding-right: 3px;
}
.formula input {
  flex: 1;
}

/* worksheet */
.main {
  flex: 1;
  display: flex;
  min-height: 0;
}
.book {
  flex: 1;
  min-width: 0;
  display: flex;
  flex-direction: column;
}
.gridwrap {
  flex: 1;
  display: flex;
  min-height: 0;
}
.sheet {
  position: relative;
  flex: 1;
  min-width: 0;
  overflow: hidden;
}
table {
  table-layout: fixed;
  width: 100%;
  border-spacing: 0;
  background: #fff;
}
.cn {
  width: 22px;
}
.ca {
  width: 288px;
}
.cb {
  width: 168px;
}
.c53 {
  width: 53px;
}
.c54 {
  width: 54px;
}
th,
td {
  padding: 0;
}
th {
  background: #0a0a0a;
  color: #c4c4c4;
  font-weight: 400;
}
thead th {
  height: 16px;
  line-height: 14px;
  border-right: 1px solid #333;
}
.corner svg {
  display: block;
  margin: 3px 3px 2px auto;
}
tbody th {
  vertical-align: bottom;
  font-size: 11px;
  line-height: 15px;
  border-bottom: 1px solid #333;
}
td {
  border-right: 1px solid #e4e4e4;
  border-bottom: 1px solid #e4e4e4;
  color: #111;
  overflow: hidden;
}
.r32 {
  height: 32px;
}
.r31 {
  height: 31px;
}
.r16 {
  height: 16px;
}
.ar {
  font: 15px/24px "DejaVu Sans", sans-serif;
  white-space: nowrap;
  padding: 0 2px 4px 0;
}
.first .ar {
  border-bottom: 1px solid #000;
}
.va,
.vb {
  border-right: 1px solid #000;
  border-bottom: 1px solid #000;
  text-align: right;
  font: 20px/28px "Liberation Sans", Arial, sans-serif;
  padding-right: 3px;
}
.vb {
  font-size: 25px;
  padding-right: 4px;
}
.chart {
  position: absolute;
  left: 501px;
  top: 84px;
}
.tick {
  font-size: 9px;
  fill: #595959;
}
.ctitle {
  font: 12px "DejaVu Sans", sans-serif;
  fill: #595959;
}
.cbtns {
  position: absolute;
  left: 983px;
  top: 87px;
  display: flex;
  flex-direction: column;
  gap: 7px;
}
.cbtns button {
  display: flex;
  align-items: center;
  justify-content: center;
  width: 24px;
  height: 24px;
  background: #fff;
  border: 1px solid #777;
}
.vscroll {
  display: flex;
  flex-direction: column;
  align-items: center;
  width: 17px;
  padding: 4px 0 0;
}
.vscroll .track {
  flex: 1;
  width: 7px;
  padding: 4px 0 24px;
}
.vscroll b,
.htrack b {
  display: block;
  height: 100%;
  background: #9a9a9a;
  border-radius: 4px;
}
.up,
.down {
  border: 4px solid transparent;
  width: 0;
}
.up {
  border-top: 0;
  border-bottom: 5px solid #aaa;
}
.down {
  border-bottom: 0;
  border-top: 5px solid #aaa;
  margin-bottom: 2px;
}
.sheetbar {
  display: flex;
  height: 27px;
  align-items: center;
  padding: 0 20px;
}
.nav {
  width: 7px;
  margin-right: 20px;
}
.sheettab {
  align-self: flex-start;
  width: 48px;
  height: 23px;
  margin-left: 20px;
  background: #fff;
  border-radius: 0 0 4px 4px;
  color: #222;
  font-size: 11px;
}
.sheettab span {
  display: inline-block;
  line-height: 17px;
  font-weight: 500;
  border-bottom: 2px solid #3b7f56;
}
.tsep {
  width: 1px;
  height: 15px;
  background: #444;
  margin: 0 35px 0 3px;
}
.hscroll {
  display: flex;
  align-items: center;
  width: 396px;
  margin-left: auto;
}
.left,
.right {
  border: 4px solid transparent;
  height: 0;
}
.left {
  border-left: 0;
  border-right: 6px solid #aaa;
  margin: 0 4px 0 16px;
}
.right {
  border-right: 0;
  border-left: 6px solid #aaa;
}
.htrack {
  flex: 1;
  height: 8px;
  padding-right: 18px;
}

/* format pane */
.pane {
  width: 237px;
  flex: none;
  display: flex;
  flex-direction: column;
  border-left: 1px solid #333;
  padding: 0 8px 14px 9px;
}
.phead {
  display: flex;
  align-items: center;
  height: 40px;
  gap: 18px;
  padding-right: 7px;
}
h2 {
  flex: 1;
  margin: 0;
  font-size: 16px;
  line-height: 22px;
  font-weight: 400;
  white-space: nowrap;
}
.ptabs {
  display: flex;
  align-items: center;
  gap: 6px;
  height: 14px;
  padding-left: 4px;
  font-size: 9px;
}
.pt.on {
  font-weight: 700;
  color: #fff;
}
.pt:last-child {
  margin-left: 9px;
}
.picons {
  display: flex;
  gap: 5px;
  margin-top: 8px;
}
.picons button {
  width: 28px;
  height: 28px;
  display: flex;
  align-items: center;
  justify-content: center;
  border: 1px solid transparent;
  border-radius: 3px;
}
.picons .on {
  background: #2a2a2a;
  border-color: #666;
}
.notch {
  position: relative;
  margin: 4px 0 -2px 8px;
}
.pbody {
  flex: 1;
  min-height: 0;
  display: flex;
  border-top: 1px solid #444;
}
.pscroll {
  flex: 1;
  overflow: hidden;
  padding: 0 5px 0 18px;
  margin-top: 3px;
}
h3 {
  display: flex;
  align-items: center;
  gap: 4px;
  margin: -8px 0 9px -9px;
  font-size: 10px;
  line-height: 14px;
}
h3 i {
  border: 3px solid transparent;
  border-top: 4px solid #ddd;
  border-bottom: 0;
}
.radio {
  display: flex;
  align-items: center;
  gap: 4px;
  height: 19px;
}
.radio input {
  width: 11px;
  height: 11px;
  border: 1px solid #666;
  border-radius: 6px;
  background: #333;
}
.radio input:checked {
  border: 3px solid #5bc27a;
  background: #0a0a0a;
}
hr {
  border: 0;
  border-top: 1px solid #484848;
  margin: 4px 0 3px;
}
.field {
  display: flex;
  align-items: center;
  height: 22px;
  padding-left: 8px;
}
.field.tall {
  height: 28px;
}
.field label {
  flex: 1;
  white-space: nowrap;
}
.drop {
  width: 38px;
  height: 24px;
  display: flex;
  align-items: center;
  justify-content: center;
  gap: 7px;
  background: #262626;
  border: 1px solid #5a5a5a;
  border-radius: 3px;
}
.drop:disabled {
  opacity: 0.6;
}
.spin {
  position: relative;
  width: 62px;
  height: 18px;
}
.spin.cap {
  width: 54px;
}
.spin.join {
  width: 52px;
}
.spin input,
.spin select {
  display: block;
  appearance: none;
  width: 100%;
  height: 100%;
  background: #262626;
  border: 1px solid #5a5a5a;
  border-radius: 3px;
}
.spin svg {
  position: absolute;
  right: 4px;
  top: 0;
  bottom: 0;
  margin: auto 0;
}
.trans {
  width: 38px;
  height: 10px;
  margin-right: 7px;
  background: linear-gradient(#555, #555) center / 100% 1px no-repeat;
}
.trans::-webkit-slider-thumb {
  appearance: none;
  width: 1px;
  height: 9px;
  background: #ddd;
}
.ps {
  width: 11px;
  margin-right: 3px;
  padding-top: 8px;
}
.ps .track {
  width: 7px;
  padding: 31px 0 25px;
}

/* status bar */
.status {
  display: flex;
  align-items: center;
  flex: none;
  height: 19px;
  padding: 0 7px 0 9px;
  border-top: 1px solid #333;
  border-bottom: 1px solid #333;
  background: #131313;
  font-size: 8px;
}
.ready {
  font-size: 9px;
}
.acc {
  display: flex;
  align-items: center;
  gap: 2px;
  margin-left: 14px;
  font-weight: 700;
  color: #fff;
}
.stat {
  margin-right: 14px;
}
.views {
  display: flex;
  height: 100%;
}
.views button {
  width: 33px;
  display: flex;
  align-items: center;
  justify-content: center;
}
.views .on {
  background: #222;
}
.zoom {
  display: flex;
  align-items: center;
  gap: 5px;
  margin: 0 10px 0 4px;
}
.zoom .ib {
  font-size: 12px;
}
.zoom input {
  width: 84px;
  height: 10px;
  background: linear-gradient(#777, #777) center / 100% 1px no-repeat;
}
.zoom input::-webkit-slider-thumb {
  appearance: none;
  width: 4px;
  height: 10px;
  background: #bbb;
}

/* taskbar */
.taskbar {
  display: flex;
  align-items: center;
  flex: none;
  height: 39px;
  background: linear-gradient(90deg, #18201f, #1e232b 25%, #1e2520 50%, #1c221b 75%, #1b2a1e);
}
.weather {
  width: 313px;
  display: flex;
  align-items: center;
  gap: 6px;
  padding-left: 16px;
  text-align: left;
  line-height: 13px;
}
.start {
  display: flex;
}
.tsearch {
  display: flex;
  align-items: center;
  gap: 8px;
  width: 183px;
  height: 27px;
  margin: 0 4px 0 12px;
  padding: 0 5px 0 10px;
  background: #3a4041;
  border-top: 1px solid #4c5253;
  border-radius: 14px;
  font-size: 11px;
}
.tsearch input {
  flex: 1;
}
.tsearch input::placeholder {
  color: #ccc;
  opacity: 1;
}
.apps {
  display: flex;
  gap: 5px;
}
.apps button {
  position: relative;
  width: 32px;
  height: 36px;
  margin-right: -1px;
  border-radius: 4px;
  display: flex;
  align-items: center;
  justify-content: center;
}
.apps button:nth-child(even) {
  margin-right: 0;
}
.apps .active {
  background: #2c332c;
}
.apps .on::after,
.apps .active::after {
  content: "";
  position: absolute;
  bottom: 1px;
  width: 5px;
  height: 2px;
  border-radius: 1px;
  background: #999;
}
.apps .active::after {
  width: 13px;
  background: #6cc6e0;
}
.tray {
  display: flex;
  align-items: center;
  gap: 6px;
  margin-left: auto;
  padding-right: 18px;
}
.tray svg:nth-child(-n + 3) {
  margin-right: 8px;
}
.lang {
  margin: 0 14px 0 16px;
}
.clock {
  text-align: right;
  line-height: 13px;
  margin-left: 8px;
}
</style>
